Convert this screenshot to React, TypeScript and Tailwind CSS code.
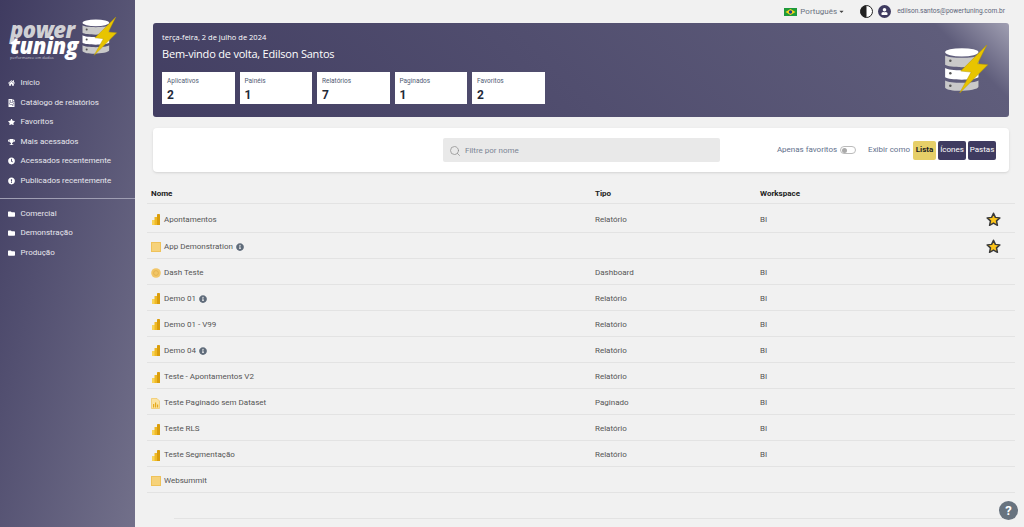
import React from "react";
import { FaHome, FaStar, FaTrophy, FaClock, FaExclamationCircle, FaFolder, FaFileInvoice, FaCaretDown, FaUser, FaInfoCircle } from "react-icons/fa";
import { Search } from "lucide-react";

const font = { fontFamily: 'Roboto, "Open Sans", sans-serif' };

function Db({ size = 44 }: { size?: number }) {
  return (
    <svg width={size} height={size} viewBox="0 0 48 48" className="block">
      <ellipse cx="19" cy="7" rx="16" ry="4" fill="#fff" />
      <path d="M3 10c4 3 28 3 32 0v9c-4 3-28 3-32 0z" fill="#c9c9c9" />
      <path d="M3 22c4 3 28 3 32 0v9c-4 3-28 3-32 0z" fill="#fff" />
      <path d="M3 34c4 3 28 3 32 0v6c0 4-28 6-32 1z" fill="#c9c9c9" />
      <circle cx="8" cy="15" r="1.2" fill="#555" />
      <circle cx="8" cy="27" r="1.2" fill="#555" />
      <circle cx="8" cy="39" r="1.2" fill="#555" />
      <path d="M43 0 L18 25 L28 26 L17 46 L44 19 L34 18 Z" fill="#e8c400" stroke="#b89b00" strokeWidth="0.5" />
    </svg>
  );
}

function PbiIcon() {
  return (
    <svg width="8" height="11" viewBox="0 0 8 11" className="ml-[1px]">
      <rect x="0" y="6" width="3" height="5" fill="#f8d458" />
      <rect x="2.500" y="3" width="3" height="8" fill="#efb926" />
      <path d="M5 .7Q5 0 5.700 0H7.300Q8 0 8 .7V11H5z" fill="#d99d0c" />
    </svg>
  );
}
function AppIcon() {
  return <span className="block w-[10px] h-[10px] bg-[#f6d27a] border border-[#efc25a]" />;
}
function DashIcon() {
  return (
    <svg width="10" height="10" viewBox="0 0 10 10">
      <circle cx="5" cy="5" r="4.800" fill="#f2c667" />
      <circle cx="5" cy="5" r="2.400" fill="none" stroke="#dfae4c" strokeWidth="0.8" />
    </svg>
  );
}
function PagIcon() {
  return (
    <svg width="9" height="11" viewBox="0 0 9 11">
      <path d="M0.5 0.5h5.500l2.500 2.500v7.500h-8z" fill="#fbe3a2" stroke="#f0c45b" strokeWidth="0.7" />
      <rect x="2" y="6" width="1.200" height="3.500" fill="#e5a91e" />
      <rect x="4" y="4.500" width="1.200" height="5" fill="#e5a91e" />
      <rect x="6" y="6.500" width="1.200" height="3" fill="#e5a91e" />
    </svg>
  );
}
function BigStar() {
  return (
    <svg width="15" height="15" viewBox="0 0 24 24" className="-mt-[1px]">
      <path d="M12 2l3 6.600 7.200.8-5.400 4.800 1.500 7.100L12 17.700l-6.300 3.600 1.500-7.100L1.800 9.400 9 8.600z" fill="#fcc419" stroke="#3a3a3a" strokeWidth="2.400" strokeLinejoin="round" />
    </svg>
  );
}

const nav1: [React.ComponentType<{ className?: string }>, string][] = [
  [FaHome, "Início"],
  [FaFileInvoice, "Catálogo de relatórios"],
  [FaStar, "Favoritos"],
  [FaTrophy, "Mais acessados"],
  [FaClock, "Acessados recentemente"],
  [FaExclamationCircle, "Publicados recentemente"],
];
const nav2 = ["Comercial", "Demonstração", "Produção"];
const stats: [string, string][] = [["Aplicativos", "2"], ["Painéis", "1"], ["Relatórios", "7"], ["Paginados", "1"], ["Favoritos", "2"]];

type Row = { n: string; t: string; w: string; i: React.ReactNode; info?: boolean; star?: boolean; first?: boolean };
const rows: Row[] = [
  { n: "Apontamentos", t: "Relatório", w: "BI", i: <PbiIcon />, star: true, first: true },
  { n: "App Demonstration", t: "", w: "", i: <AppIcon />, info: true, star: true },
  { n: "Dash Teste", t: "Dashboard", w: "BI", i: <DashIcon /> },
  { n: "Demo 01", t: "Relatório", w: "BI", i: <PbiIcon />, info: true },
  { n: "Demo 01 - V99", t: "Relatório", w: "BI", i: <PbiIcon /> },
  { n: "Demo 04", t: "Relatório", w: "BI", i: <PbiIcon />, info: true },
  { n: "Teste - Apontamentos V2", t: "Relatório", w: "BI", i: <PbiIcon /> },
  { n: "Teste Paginado sem Dataset", t: "Paginado", w: "BI", i: <PagIcon /> },
  { n: "Teste RLS", t: "Relatório", w: "BI", i: <PbiIcon /> },
  { n: "Teste Segmentação", t: "Relatório", w: "BI", i: <PbiIcon /> },
  { n: "Websummit", t: "", w: "", i: <AppIcon /> },
];

export default function App() {
  return (
    <div className="flex h-[527px] w-[1024px] overflow-hidden bg-[#f1f1f1] relative" style={font}>
      <aside className="w-[135px] shrink-0 h-full bg-gradient-to-br from-[#3f3b60] to-[#72708a] text-white">
        <div className="h-[73.500px] pl-[10px] pt-[17px] flex items-start">
          <div className="w-[70px] pt-[5px] italic font-extrabold" style={{ fontFamily: '"Open Sans", sans-serif' }}>
            <div className="text-[#d0d0d4] text-[22px] leading-[14px] tracking-[-0.5px]">power</div>
            <div className="text-white text-[22px] leading-[14px] tracking-[-0.5px] mt-[2px]">tuning</div>
            <div className="text-[4px] leading-[5px] mt-[3px] not-italic font-normal text-[#c6c6d0] whitespace-nowrap">performance em dados</div>
          </div>
          <div><Db size={40} /></div>
        </div>
        <div>
          {nav1.map(([I, l]) => (
            <div key={l} className="h-[19.500px] flex items-center pl-[8px] gap-[5.500px] text-[8px] text-[#e8e8ee] whitespace-nowrap">
              <span className="w-[7px] flex justify-center"><I className="text-white text-[8px]" /></span>{l}
            </div>
          ))}
        </div>
        <div className="border-t border-[#9f9eb3] mt-[7.500px] mb-[5px]" />
        {nav2.map((l) => (
          <div key={l} className="h-[19.500px] flex items-center pl-[8px] gap-[5.500px] text-[8px] text-[#e8e8ee]">
            <span className="w-[7px] flex justify-center"><FaFolder className="text-white text-[8px]" /></span>{l}
          </div>
        ))}
      </aside>

      <main className="flex-1 min-w-0 pl-[18px] pr-[15px] relative">
        <header className="h-[23px] flex items-center justify-end pr-[4px] text-[6.600px] text-[#5c6478]">
          <svg width="13" height="8" viewBox="0 0 13 8" className="mr-[3px]">
            <rect width="13" height="8" fill="#1f9a3a" />
            <path d="M6.500 1L11.500 4 6.500 7 1.500 4z" fill="#f7d619" />
            <circle cx="6.500" cy="4" r="1.700" fill="#23408f" />
          </svg>
          <span className="text-[8px] text-[#6b7280]">Português</span>
          <FaCaretDown className="text-[7px] text-[#444] ml-[1px] mr-[15px]" />
          <svg width="13" height="13" viewBox="0 0 13 13" className="mr-[5px]">
            <circle cx="6.500" cy="6.500" r="6" fill="#fff" stroke="#222" strokeWidth="1" />
            <path d="M6.500.5a6 6 0 000 12z" fill="#222" />
          </svg>
          <span className="w-[13px] h-[13px] rounded-full bg-[#3f3b60] flex items-center justify-center mr-[6px]"><FaUser className="text-white text-[7px]" /></span>
          <span>edilson.santos@powertuning.com.br</span>
        </header>

        <section className="h-[94px] rounded-[3px] bg-[linear-gradient(45deg,#423e62_0%,#5f5d7b_92%,#a09fb2_100%)] pl-[9px] pt-[9px] text-white relative">
          <div className="text-[7.500px] leading-[10px]" style={{ fontFamily: '"Open Sans", sans-serif' }}>terça-feira, 2 de julho de 2024</div>
          <div className="text-[11px] leading-[15px] mt-[4px] tracking-[-0.2px]" style={{ fontFamily: '"Open Sans", sans-serif' }}>Bem-vindo de volta, Edilson Santos</div>
          <div className="flex gap-[5px] mt-[11px]">
            {stats.map(([a, b]) => (
              <div key={a} className="w-[72.500px] h-[32px] bg-white pl-[5px] pt-[5px] text-[#1f2937]">
                <div className="text-[6.500px] leading-[9px] text-[#4f5b73]">{a}</div>
                <div className="text-[12px] leading-[15px] font-bold mt-[2px]">{b}</div>
              </div>
            ))}
          </div>
          <div className="absolute right-[17px] top-[22px]"><Db size={50} /></div>
        </section>

        <section className="mt-[11px] h-[44px] rounded-[4px] bg-white shadow-sm flex items-center pr-[13px]">
          <div className="ml-[290px] w-[277px] h-[24px] bg-[#e9e9e9] rounded-[2px] flex items-center pl-[6px] pt-[1px] gap-[4px] text-[8px] text-[#7b8594]">
            <Search size={12} strokeWidth={1.500} className="text-[#8e8e8e]" />Filtre por nome
          </div>
          <div className="ml-auto flex items-center text-[8px] text-[#5f6f8c] whitespace-nowrap">
            <span>Apenas favoritos</span>
            <span className="ml-[3px] w-[16px] h-[8px] rounded-full border border-[#bbb] bg-white flex items-center pl-[1px]"><span className="w-[5px] h-[5px] rounded-full bg-[#aaa]" /></span>
            <span className="ml-[12px]">Exibir como</span>
            <span className="ml-[3px] w-[23px] h-[19px] rounded-[2px] bg-[#e6cf68] text-[#222] font-bold flex items-center justify-center">Lista</span>
            <span className="ml-[2px] w-[28px] h-[19px] rounded-[2px] bg-[#3f3b60] text-white flex items-center justify-center">Ícones</span>
            <span className="ml-[2px] w-[28px] h-[19px] rounded-[2px] bg-[#3f3b60] text-white flex items-center justify-center">Pastas</span>
          </div>
        </section>

        <div className="-ml-[6px] -mr-[6px] mt-[10px] text-[8px] text-[#555]">
          <div className="h-[22px] grid grid-cols-[444px_165px_1fr] items-center border-b border-[#e3e3e3] pl-[4px] pt-[3px] font-bold text-[#222]">
            <span>Nome</span><span>Tipo</span><span>Workspace</span>
          </div>
          {rows.map((r) => (
            <div key={r.n} className={`${r.first ? "h-[28.500px] pt-[4px]" : "h-[26.100px] pt-[3px]"} grid grid-cols-[444px_165px_1fr_29px] items-center border-b border-[#e3e3e3] pl-[4px]`}>
              <span className="flex items-center">
                <span className="w-[13px] flex items-center">{r.i}</span>
                {r.n}
                {r.info && <FaInfoCircle className="ml-[3px] text-[8px] text-[#5f6b7a]" />}
              </span>
              <span>{r.t}</span>
              <span>{r.w}</span>
              <span>{r.star && <BigStar />}</span>
            </div>
          ))}
        </div>
        <div className="absolute left-[39px] right-[9px] top-[518px] border-t border-[#e3e3e3]" />
        <div className="absolute right-[6px] top-[501px] w-[19px] h-[19px] rounded-full bg-[#68737f] text-white text-[13px] font-bold flex items-center justify-center">?</div>
      </main>
    </div>
  );
}
